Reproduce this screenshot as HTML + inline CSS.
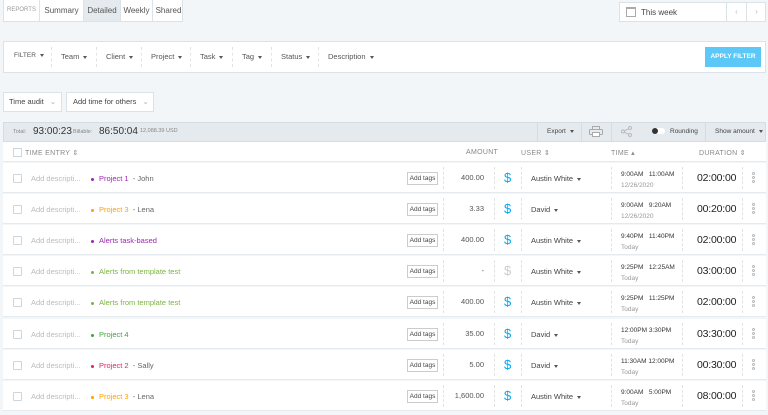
<!DOCTYPE html><html><head><style>
*{box-sizing:border-box;margin:0;padding:0}
body{width:768px;height:415px;background:#f2f6f8;font-family:"Liberation Sans",sans-serif;font-size:8px;color:#555;position:relative;overflow:hidden}
.a{position:absolute}
.box{position:absolute;background:#fff;border:1px solid #dce3e8}
.tab{position:absolute;top:0;height:21px;line-height:21px;text-align:center;font-size:8px;color:#555;border-right:1px solid #dce3e8}
.f{position:absolute;top:52px;font-size:7.5px;color:#555}
.row{position:absolute;left:3px;width:763px;height:30px;background:#fff;border-bottom:1px solid #e4eaee}
.cb{position:absolute;left:10px;top:11px;width:9px;height:9px;border:1px solid #cfd6db;border-radius:1px}
.desc{position:absolute;left:28px;top:11px;color:#bbb;font-size:7.5px}
.proj{position:absolute;left:88px;top:11px;font-size:7.5px}
.proj i{display:inline-block;width:3px;height:3px;border-radius:50%;margin-right:5px;vertical-align:middle}
.tg{position:absolute;left:404px;top:9px;width:31px;height:13px;border:1px solid #ccc;font-size:6.5px;line-height:11px;text-align:center;color:#444}
.amt{position:absolute;right:282px;top:10px;font-size:7.5px;color:#555}
.dl{position:absolute;top:4px;height:22px;border-left:1px dashed #e2e2e2}
.usd{position:absolute;left:501px;top:7px;font-size:13px;color:#03a9f4}
.usr{position:absolute;left:528px;top:11px;font-size:7.5px;color:#444}
.tm{position:absolute;left:618px;top:6px;font-size:6.5px;color:#333;line-height:11px}
.tm span{color:#999}
.dur{position:absolute;left:694px;top:9px;font-size:10.5px;color:#222;letter-spacing:-0.2px}
.dots{position:absolute;left:749px;top:9px;width:3px}
.dots b{display:block;width:3px;height:3px;border:1px solid #bbb;border-radius:50%;margin-bottom:1px}
.car{display:inline-block;border-left:2.5px solid transparent;border-right:2.5px solid transparent;border-top:3px solid #555;vertical-align:middle;margin-left:4px}
.hd{position:absolute;top:149px;font-size:7px;color:#888;letter-spacing:.3px}
</style></head><body>
<div class="box" style="left:3px;top:0;width:180px;height:22px;border-top:none">
<div class="tab" style="left:0;width:36px;font-size:6px;color:#999">REPORTS</div>
<div class="tab" style="left:36px;width:44px">Summary</div>
<div class="tab" style="left:80px;width:37px;background:#e4eaee">Detailed</div>
<div class="tab" style="left:117px;width:32px">Weekly</div>
<div class="tab" style="left:149px;width:31px;border:none">Shared</div>
</div>
<div class="box" style="left:619px;top:2px;width:147px;height:20px">
<div class="a" style="left:6px;top:4px;width:10px;height:10px;border:1px solid #aaa;border-top-width:2px"></div>
<div class="a" style="left:21px;top:5px;font-size:8px;color:#444">This week</div>
<div class="a" style="left:106px;top:0;width:20px;height:18px;border-left:1px solid #dce3e8;text-align:center;line-height:17px;color:#bbb">‹</div>
<div class="a" style="left:126px;top:0;width:20px;height:18px;border-left:1px solid #dce3e8;text-align:center;line-height:17px;color:#bbb">›</div>
</div>
<div class="box" style="left:3px;top:41px;width:763px;height:32px"></div>
<div class="f" style="left:14px;font-size:6.5px">FILTER<span class="car"></span></div>
<div class="a" style="left:51px;top:47px;height:20px;border-left:1px dashed #e2e2e2"></div>
<div class="f" style="left:61px">Team<span class="car"></span></div>
<div class="a" style="left:96px;top:47px;height:20px;border-left:1px dashed #e2e2e2"></div>
<div class="f" style="left:106px">Client<span class="car"></span></div>
<div class="a" style="left:141px;top:47px;height:20px;border-left:1px dashed #e2e2e2"></div>
<div class="f" style="left:151px">Project<span class="car"></span></div>
<div class="a" style="left:190px;top:47px;height:20px;border-left:1px dashed #e2e2e2"></div>
<div class="f" style="left:200px">Task<span class="car"></span></div>
<div class="a" style="left:232px;top:47px;height:20px;border-left:1px dashed #e2e2e2"></div>
<div class="f" style="left:242px">Tag<span class="car"></span></div>
<div class="a" style="left:271px;top:47px;height:20px;border-left:1px dashed #e2e2e2"></div>
<div class="f" style="left:281px">Status<span class="car"></span></div>
<div class="a" style="left:318px;top:47px;height:20px;border-left:1px dashed #e2e2e2"></div>
<div class="f" style="left:328px">Description<span class="car"></span></div>
<div class="a" style="left:705px;top:47px;width:56px;height:20px;background:#5bc8f7;color:#fff;font-size:6.5px;font-weight:bold;text-align:center;line-height:20px">APPLY FILTER</div>
<div class="box" style="left:3px;top:92px;width:59px;height:20px;font-size:7.5px;line-height:18px;padding-left:5px;color:#444">Time audit <span style="color:#aaa;margin-left:4px">⌄</span></div>
<div class="box" style="left:66px;top:92px;width:88px;height:20px;font-size:7.5px;line-height:18px;padding-left:6px;color:#444">Add time for others <span style="color:#aaa;margin-left:4px">⌄</span></div>
<div class="a" style="left:3px;top:122px;width:763px;height:20px;background:#e4eaee;border:1px solid #d6dde2"></div>
<div class="a" style="left:13px;top:129px;font-size:5.5px;color:#888">Total:</div>
<div class="a" style="left:33px;top:126px;font-size:10px;color:#333">93:00:23</div>
<div class="a" style="left:73px;top:129px;font-size:5.5px;color:#888">Billable:</div>
<div class="a" style="left:99px;top:126px;font-size:10px;color:#333">86:50:04</div>
<div class="a" style="left:140px;top:128px;font-size:5.5px;color:#888">12,088.39 USD</div>
<div class="a" style="left:537px;top:122px;height:20px;border-left:1px solid #d6dde2"></div>
<div class="a" style="left:547px;top:128px;font-size:6.5px;color:#444">Export<span class="car"></span></div>
<div class="a" style="left:581px;top:122px;height:20px;border-left:1px solid #d6dde2"></div>
<svg class="a" style="left:589px;top:126px" width="14" height="11" viewBox="0 0 14 11"><rect x="3.5" y="0.5" width="7" height="3" fill="none" stroke="#aaa"/><rect x="0.5" y="3.5" width="13" height="5" rx="1" fill="none" stroke="#aaa"/><rect x="3.5" y="6.5" width="7" height="4" fill="#fff" stroke="#aaa"/></svg>
<div class="a" style="left:611px;top:122px;height:20px;border-left:1px solid #d6dde2"></div>
<svg class="a" style="left:621px;top:126px" width="11" height="11" viewBox="0 0 11 11"><circle cx="9" cy="2" r="1.5" fill="none" stroke="#bbb"/><circle cx="2" cy="5.5" r="1.5" fill="none" stroke="#bbb"/><circle cx="9" cy="9" r="1.5" fill="none" stroke="#bbb"/><path d="M3.3 4.8L7.7 2.7M3.3 6.2L7.7 8.3" stroke="#bbb"/></svg>
<div class="a" style="left:652px;top:128px;width:13px;height:6px;background:#fff;border-radius:3px"></div>
<div class="a" style="left:652px;top:128px;width:6px;height:6px;background:#333;border-radius:50%"></div>
<div class="a" style="left:670px;top:128px;font-size:6.5px;color:#444">Rounding</div>
<div class="a" style="left:705px;top:122px;height:20px;border-left:1px solid #d6dde2"></div>
<div class="a" style="left:715px;top:128px;font-size:6.5px;color:#444">Show amount<span class="car"></span></div>
<div class="a" style="left:3px;top:142px;width:763px;height:20px;background:#fff;border-bottom:1px solid #e4eaee"></div>
<div class="a" style="left:13px;top:148px;width:9px;height:9px;border:1px solid #cfd6db"></div>
<div class="hd" style="left:25px">TIME ENTRY ⇕</div>
<div class="hd" style="left:466px">AMOUNT</div>
<div class="hd" style="left:521px">USER ⇕</div>
<div class="hd" style="left:611px">TIME ▴</div>
<div class="hd" style="left:699px">DURATION ⇕</div>

<div class="row" style="top:163px"><div class="cb"></div><div class="desc">Add descripti...</div><div class="proj" style="color:#9c27b0"><i style="background:#9c27b0"></i>Project 1 <span style="color:#666">&nbsp;- John</span></div><div class="tg">Add tags</div><div class="dl" style="left:440px"></div><div class="amt">400.00</div><div class="dl" style="left:491px"></div><div class="usd">$</div><div class="dl" style="left:518px"></div><div class="usr">Austin White<span class="car"></span></div><div class="dl" style="left:608px"></div><div class="tm">9:00AM&nbsp;&nbsp;&nbsp;11:00AM<br><span>12/26/2020</span></div><div class="dl" style="left:679px"></div><div class="dur">02:00:00</div><div class="dl" style="left:739px"></div><div class="dots"><b></b><b></b><b></b></div></div>

<div class="row" style="top:194px"><div class="cb"></div><div class="desc">Add descripti...</div><div class="proj" style="color:#ffa000"><i style="background:#ffa000"></i>Project 3 <span style="color:#666">&nbsp;- Lena</span></div><div class="tg">Add tags</div><div class="dl" style="left:440px"></div><div class="amt">3.33</div><div class="dl" style="left:491px"></div><div class="usd">$</div><div class="dl" style="left:518px"></div><div class="usr">David<span class="car"></span></div><div class="dl" style="left:608px"></div><div class="tm">9:00AM&nbsp;&nbsp;&nbsp;9:20AM<br><span>12/26/2020</span></div><div class="dl" style="left:679px"></div><div class="dur">00:20:00</div><div class="dl" style="left:739px"></div><div class="dots"><b></b><b></b><b></b></div></div>

<div class="row" style="top:225px"><div class="cb"></div><div class="desc">Add descripti...</div><div class="proj" style="color:#9c27b0"><i style="background:#9c27b0"></i>Alerts task-based</div><div class="tg">Add tags</div><div class="dl" style="left:440px"></div><div class="amt">400.00</div><div class="dl" style="left:491px"></div><div class="usd">$</div><div class="dl" style="left:518px"></div><div class="usr">Austin White<span class="car"></span></div><div class="dl" style="left:608px"></div><div class="tm">9:40PM&nbsp;&nbsp;&nbsp;11:40PM<br><span>Today</span></div><div class="dl" style="left:679px"></div><div class="dur">02:00:00</div><div class="dl" style="left:739px"></div><div class="dots"><b></b><b></b><b></b></div></div>

<div class="row" style="top:256px"><div class="cb"></div><div class="desc">Add descripti...</div><div class="proj" style="color:#7cb342"><i style="background:#7cb342"></i>Alerts from template test</div><div class="tg">Add tags</div><div class="dl" style="left:440px"></div><div class="amt">-</div><div class="dl" style="left:491px"></div><div class="usd" style="color:#ccc">$</div><div class="dl" style="left:518px"></div><div class="usr">Austin White<span class="car"></span></div><div class="dl" style="left:608px"></div><div class="tm">9:25PM&nbsp;&nbsp;&nbsp;12:25AM<br><span>Today</span></div><div class="dl" style="left:679px"></div><div class="dur">03:00:00</div><div class="dl" style="left:739px"></div><div class="dots"><b></b><b></b><b></b></div></div>

<div class="row" style="top:287px"><div class="cb"></div><div class="desc">Add descripti...</div><div class="proj" style="color:#7cb342"><i style="background:#7cb342"></i>Alerts from template test</div><div class="tg">Add tags</div><div class="dl" style="left:440px"></div><div class="amt">400.00</div><div class="dl" style="left:491px"></div><div class="usd">$</div><div class="dl" style="left:518px"></div><div class="usr">Austin White<span class="car"></span></div><div class="dl" style="left:608px"></div><div class="tm">9:25PM&nbsp;&nbsp;&nbsp;11:25PM<br><span>Today</span></div><div class="dl" style="left:679px"></div><div class="dur">02:00:00</div><div class="dl" style="left:739px"></div><div class="dots"><b></b><b></b><b></b></div></div>

<div class="row" style="top:319px"><div class="cb"></div><div class="desc">Add descripti...</div><div class="proj" style="color:#43a047"><i style="background:#43a047"></i>Project 4</div><div class="tg">Add tags</div><div class="dl" style="left:440px"></div><div class="amt">35.00</div><div class="dl" style="left:491px"></div><div class="usd">$</div><div class="dl" style="left:518px"></div><div class="usr">David<span class="car"></span></div><div class="dl" style="left:608px"></div><div class="tm">12:00PM&nbsp;3:30PM<br><span>Today</span></div><div class="dl" style="left:679px"></div><div class="dur">03:30:00</div><div class="dl" style="left:739px"></div><div class="dots"><b></b><b></b><b></b></div></div>

<div class="row" style="top:350px"><div class="cb"></div><div class="desc">Add descripti...</div><div class="proj" style="color:#e91e63"><i style="background:#e91e63"></i>Project 2 <span style="color:#666">&nbsp;- Sally</span></div><div class="tg">Add tags</div><div class="dl" style="left:440px"></div><div class="amt">5.00</div><div class="dl" style="left:491px"></div><div class="usd">$</div><div class="dl" style="left:518px"></div><div class="usr">David<span class="car"></span></div><div class="dl" style="left:608px"></div><div class="tm">11:30AM&nbsp;12:00PM<br><span>Today</span></div><div class="dl" style="left:679px"></div><div class="dur">00:30:00</div><div class="dl" style="left:739px"></div><div class="dots"><b></b><b></b><b></b></div></div>

<div class="row" style="top:381px"><div class="cb"></div><div class="desc">Add descripti...</div><div class="proj" style="color:#ffa000"><i style="background:#ffa000"></i>Project 3 <span style="color:#666">&nbsp;- Lena</span></div><div class="tg">Add tags</div><div class="dl" style="left:440px"></div><div class="amt">1,600.00</div><div class="dl" style="left:491px"></div><div class="usd">$</div><div class="dl" style="left:518px"></div><div class="usr">Austin White<span class="car"></span></div><div class="dl" style="left:608px"></div><div class="tm">9:00AM&nbsp;&nbsp;&nbsp;5:00PM<br><span>Today</span></div><div class="dl" style="left:679px"></div><div class="dur">08:00:00</div><div class="dl" style="left:739px"></div><div class="dots"><b></b><b></b><b></b></div></div>
</body></html>
